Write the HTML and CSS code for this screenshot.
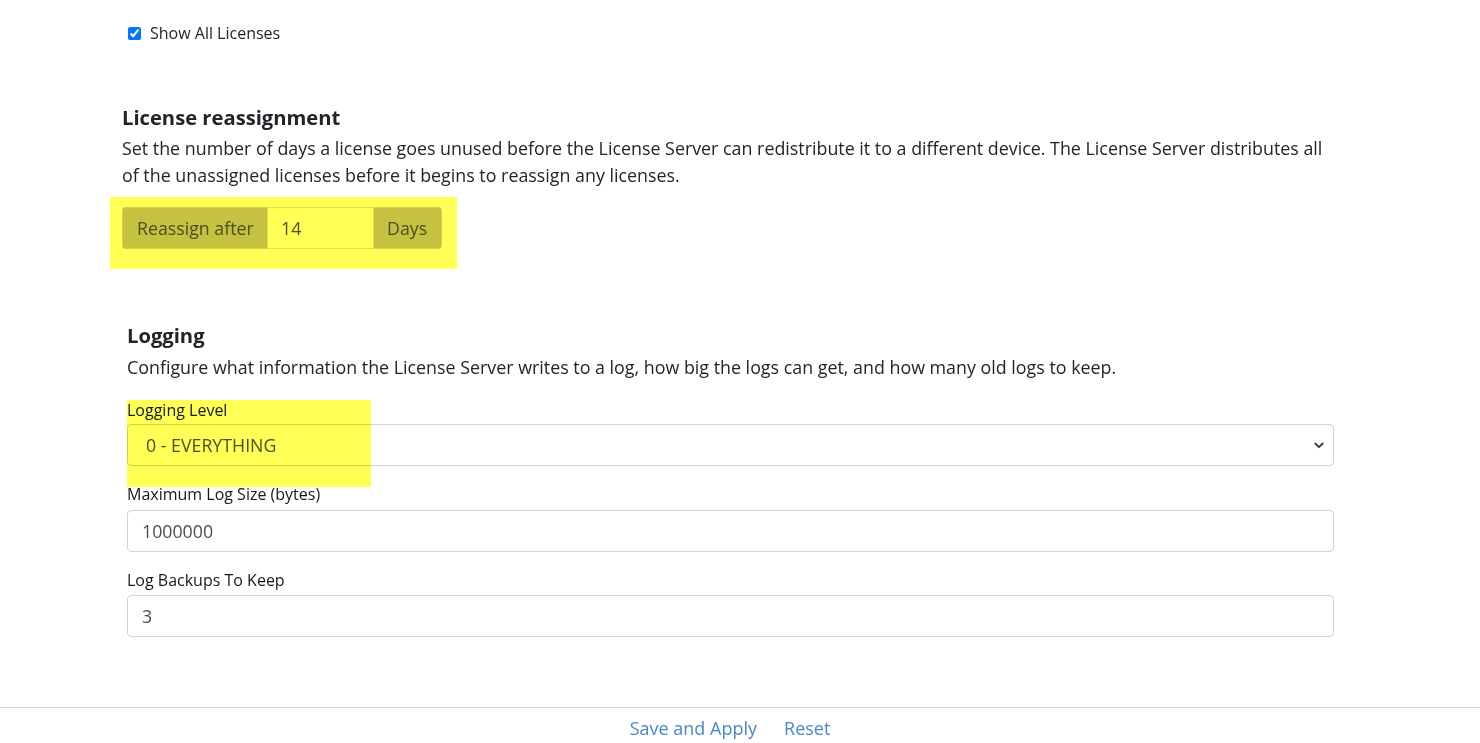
FILE: index.html
```html
<!DOCTYPE html>
<html>
<head>
<meta charset="utf-8">
<link rel="stylesheet" href="styles.css">
</head>
<body>
<main class="page">
  <label class="check-row">
    <input type="checkbox" class="check" checked>
    <span>Show All Licenses</span>
  </label>

  <section class="reassign">
    <h2 class="heading">License reassignment</h2>
    <p class="desc">Set the number of days a license goes unused before the License Server can redistribute it to a different device. The License Server distributes all of the unassigned licenses before it begins to reassign any licenses.</p>
    <div class="input-group">
      <span class="addon addon-left">Reassign after</span>
      <input class="group-input" type="text" value="14">
      <span class="addon addon-right">Days</span>
    </div>
  </section>

  <section class="logging">
    <h2 class="heading">Logging</h2>
    <p class="desc">Configure what information the License Server writes to a log, how big the logs can get, and how many old logs to keep.</p>
    <div class="field">
      <label class="field-label">Logging Level</label>
      <div class="select-box">
        <span>0 - EVERYTHING</span>
        <svg class="chev" width="10" height="7" viewBox="0 0 10 7"><path d="M1.3 1.5 L5 5.2 L8.7 1.5" fill="none" stroke="#343a40" stroke-width="1.8" stroke-linecap="round" stroke-linejoin="round"/></svg>
      </div>
    </div>
    <div class="field field-2">
      <label class="field-label">Maximum Log Size (bytes)</label>
      <input class="text-input" type="text" value="1000000">
    </div>
    <div class="field field-3">
      <label class="field-label">Log Backups To Keep</label>
      <input class="text-input" type="text" value="3">
    </div>
  </section>

  <div class="hl hl-1"></div>
  <div class="hl hl-2"></div>
</main>
<footer class="footer">
  <a class="link" href="#">Save and Apply</a>
  <a class="link" href="#">Reset</a>
</footer>
</body>
</html>
```

FILE: styles.css
```css
* { box-sizing: border-box; }
html, body { margin: 0; padding: 0; background: #fff; }
body {
  font-family: "Open Sans", "Noto Sans", sans-serif;
  color: #212529;
  font-size: 17.75px;
}
.page {
  position: relative;
  padding: 21px 0 0 122px;
  width: 1334px;
  height: 707px;
}
.check-row {
  display: flex;
  align-items: center;
  gap: 9px;
  height: 24px;
  padding-left: 6px;
  font-size: 16px;
}
.check {
  margin: 0;
  width: 13px;
  height: 13px;
  accent-color: #0075ff;
}
.heading {
  margin: 0;
  font-size: 20.2px;
  font-weight: 700;
  line-height: 25px;
}
.reassign { margin-top: 60px; }
.reassign .desc { margin: 5px 0 0; }
.desc {
  line-height: 27px;
  font-size: 17.85px;
}
.input-group {
  display: flex;
  margin-top: 18px;
  height: 42px;
  width: 320px;
  font-size: 17.75px;
  color: #495057;
}
.addon {
  display: flex;
  align-items: center;
  background: #c4c2c0;
  border: 1px solid #d2d0c8;
  padding: 0 13px;
}
.addon-left { width: 145px; padding-left: 14px; border-radius: 4px 0 0 4px; border-right: 0; }
.addon-right { width: 68px; border-radius: 0 4px 4px 0; border-left: 0; }
.group-input {
  width: 107px;
  height: 42px;
  border: 1px solid #e0e0e0;
  padding: 0 13px;
  font: inherit;
  color: #495057;
  outline: none;
}
.logging {
  margin-top: 74px;
  padding-left: 5px;
}
.logging .desc { margin: 6px 0 0; }
.field { margin-top: 18px; }
.field-2 { margin-top: 17px; }
.field-3 { margin-top: 17px; }
.field-label {
  display: block;
  font-size: 16px;
  line-height: 22px;
  font-weight: 500;
  color: #16191c;
}
.select-box, .text-input {
  display: flex;
  align-items: center;
  justify-content: space-between;
  margin-top: 3px;
  width: 1207px;
  height: 42px;
  border: 1px solid #ced4da;
  border-radius: 4px;
  padding: 0 9px 0 14px;
  font: inherit;
  font-size: 17.75px;
  color: #495057;
  background: #fff;
  outline: none;
}
.select-box span { padding-left: 4px; }
.field-2 .text-input { margin-top: 5px; }
.field-3 .text-input { margin-top: 4px; }
.hl {
  position: absolute;
  background: #ffff55;
  mix-blend-mode: multiply;
}
.hl-1 { left: 110px; top: 197px; width: 347px; height: 72px; }
.hl-2 { left: 127px; top: 400px; width: 244px; height: 87px; }
.footer {
  border-top: 1px solid #d6d6d6;
  display: flex;
  justify-content: center;
  gap: 27px;
  padding-top: 8px;
  padding-right: 20px;
  font-size: 18px;
}
.link {
  color: #4a88c9;
  text-decoration: none;
  line-height: 24px;
}
```
